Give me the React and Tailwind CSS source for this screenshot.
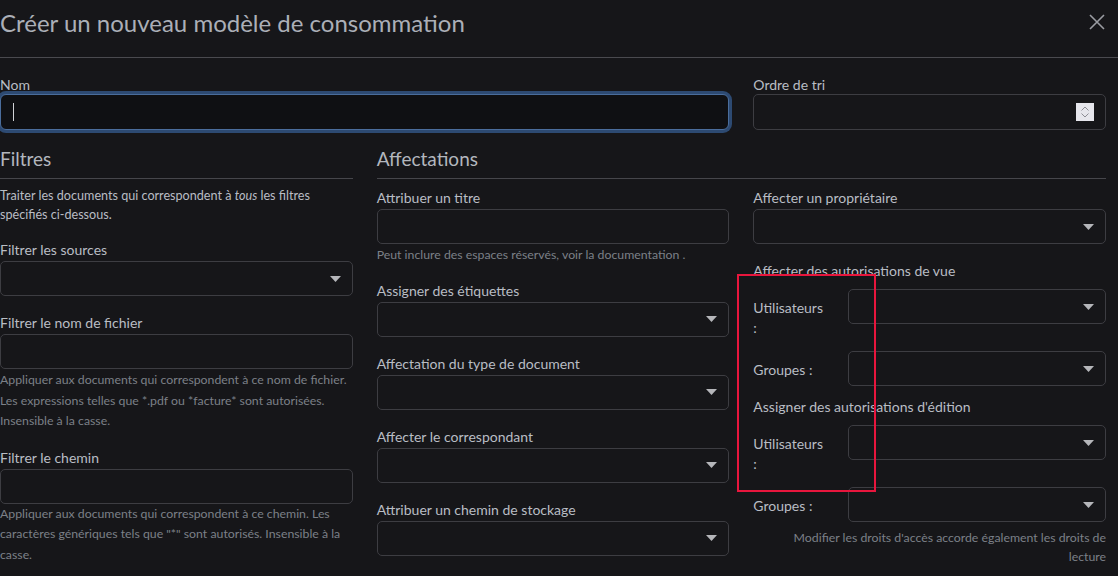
const labelCls = 'block text-[14px] leading-[18px] text-[#b9bdc4] mb-[2px]'
const helpCls = 'text-[12.3px] leading-[20.5px] text-[#7c8088]'
const boxCls = 'h-[35px] w-full rounded-[5px] border border-[#3d3d42] bg-[#161619]'

function Caret() {
  return (
    <svg width="11" height="6" viewBox="0 0 11 6" className="fill-[#b5b6ba]">
      <path d="M0 0h11L5.5 6z" />
    </svg>
  )
}

function Select({ className = '' }) {
  return (
    <div className={`${boxCls} flex items-center justify-end pr-[11px] ${className}`}>
      <Caret />
    </div>
  )
}

function Input() {
  return <div className={boxCls}></div>
}

function Field({ label, children, className = '' }) {
  return (
    <div className={className}>
      <label className={labelCls}>{label}</label>
      {children}
    </div>
  )
}

function PermRow({ label, className = '' }) {
  return (
    <div className={`flex ${className}`}>
      <div className="w-[95px] shrink-0 pt-[9px] text-[14px] leading-[20px] text-[#b9bdc4]">{label}</div>
      <Select />
    </div>
  )
}

function Section({ title }) {
  return (
    <h3 className="text-[19px] leading-[24px] text-[#b3b7be] pb-[7px] border-b border-[#46464b]">{title}</h3>
  )
}

export default function App() {
  return (
    <div className="w-[1118px] h-[576px] overflow-hidden bg-[#161619] font-['Lato',sans-serif] relative">
      {/* en-tête */}
      <div className="h-[58px] flex items-center justify-between border-b border-[#4a4a4f] pr-[12px]">
        <h2 className="text-[24px] leading-[30px] text-[#abafb7] -mt-[12px]">Créer un nouveau modèle de consommation</h2>
        <svg width="16" height="16" viewBox="0 0 16 16" className="stroke-[#9a9ca2] -mt-[13px] mr-[1px]" strokeWidth="1.6" fill="none">
          <path d="M1 1l14 14M15 1L1 15" />
        </svg>
      </div>

      <div className="pr-[12px]">
        {/* Nom / ordre */}
        <div className="grid grid-cols-3 gap-x-6 mt-[18px]">
          <div className="col-span-2">
            <label className="block text-[14px] leading-[18px] text-[#b9bdc4]">Nom</label>
            <div className="h-[36px] rounded-[6px] border border-[#4a6d9c] bg-[#0f1013] shadow-[0_0_0_3px_#2d4a72] flex items-center pl-[12px]">
              <div className="w-[1px] h-[18px] bg-[#d0d2d6]"></div>
            </div>
          </div>
          <div>
            <label className="block text-[14px] leading-[18px] text-[#b9bdc4]">Ordre de tri</label>
            <div className="h-[36px] rounded-[5px] border border-[#3d3d42] flex items-center justify-end pr-[11px]">
              <div className="w-[18px] h-[18px] bg-[#e6e6ec] flex flex-col items-center justify-center gap-[2px]">
                <svg width="8" height="5" viewBox="0 0 8 5" fill="none" className="stroke-[#8d8d94]" strokeWidth="1">
                  <path d="M0.5 4.5L4 1l3.5 3.5" />
                </svg>
                <svg width="8" height="5" viewBox="0 0 8 5" fill="none" className="stroke-[#8d8d94]" strokeWidth="1">
                  <path d="M0.5 0.5L4 4l3.5-3.5" />
                </svg>
              </div>
            </div>
          </div>
        </div>

        <div className="grid grid-cols-3 gap-x-6 mt-[17px]">
          {/* Filtres */}
          <div>
            <Section title="Filtres" />
            <p className="mt-[7px] text-[12.6px] leading-[19px] text-[#b9bdc4]">
              Traiter les documents qui correspondent à <em>tous</em> les filtres spécifiés ci-dessous.
            </p>
            <Field label="Filtrer les sources" className="mt-[17px]">
              <Select />
            </Field>
            <Field label="Filtrer le nom de fichier" className="mt-[18px]">
              <Input />
            </Field>
            <p className={`${helpCls} mt-[1px]`}>
              Appliquer aux documents qui correspondent à ce nom de fichier. Les expressions telles que *.pdf ou *facture* sont autorisées. Insensible à la casse.
            </p>
            <Field label="Filtrer le chemin" className="mt-[17px]">
              <Input />
            </Field>
            <p className={helpCls}>
              Appliquer aux documents qui correspondent à ce chemin. Les caractères génériques tels que "*" sont autorisés. Insensible à la casse.
            </p>
          </div>

          {/* Affectations */}
          <div className="col-span-2">
            <Section title="Affectations" />
            <div className="grid grid-cols-2 gap-x-6 mt-[10px]">
              <div>
                <Field label="Attribuer un titre">
                  <Input />
                </Field>
                <p className={`${helpCls} mt-[1px]`}>Peut inclure des espaces réservés, voir la documentation .</p>
                <Field label="Assigner des étiquettes" className="mt-[16px]">
                  <Select />
                </Field>
                <Field label="Affectation du type de document" className="mt-[18px]">
                  <Select />
                </Field>
                <Field label="Affecter le correspondant" className="mt-[18px]">
                  <Select />
                </Field>
                <Field label="Attribuer un chemin de stockage" className="mt-[18px]">
                  <Select />
                </Field>
              </div>

              <div>
                <Field label="Affecter un propriétaire">
                  <Select />
                </Field>
                <div className="mt-[18px] text-[14px] leading-[18px] text-[#b9bdc4]">Affecter des autorisations de vue</div>
                <PermRow className="mt-[9px]" label={<>Utilisateurs<br />:</>} />
                <PermRow className="mt-[13px]" label="Groupes :" />
                <div className="mt-[12px] text-[14px] leading-[18px] text-[#b9bdc4]">Assigner des autorisations d'édition</div>
                <PermRow className="mt-[9px]" label={<>Utilisateurs<br />:</>} />
                <PermRow className="mt-[13px]" label="Groupes :" />
                <p className="mt-[6px] text-right text-[12.3px] leading-[19px] text-[#7c8088] pl-[30px]">
                  Modifier les droits d'accès accorde également les droits de lecture
                </p>
              </div>
            </div>
          </div>
        </div>
      </div>

      {/* cadre d'annotation */}
      <div className="absolute left-[737px] top-[274px] w-[139px] h-[218px] border-2 border-[#e8163d] pointer-events-none"></div>
    </div>
  )
}
